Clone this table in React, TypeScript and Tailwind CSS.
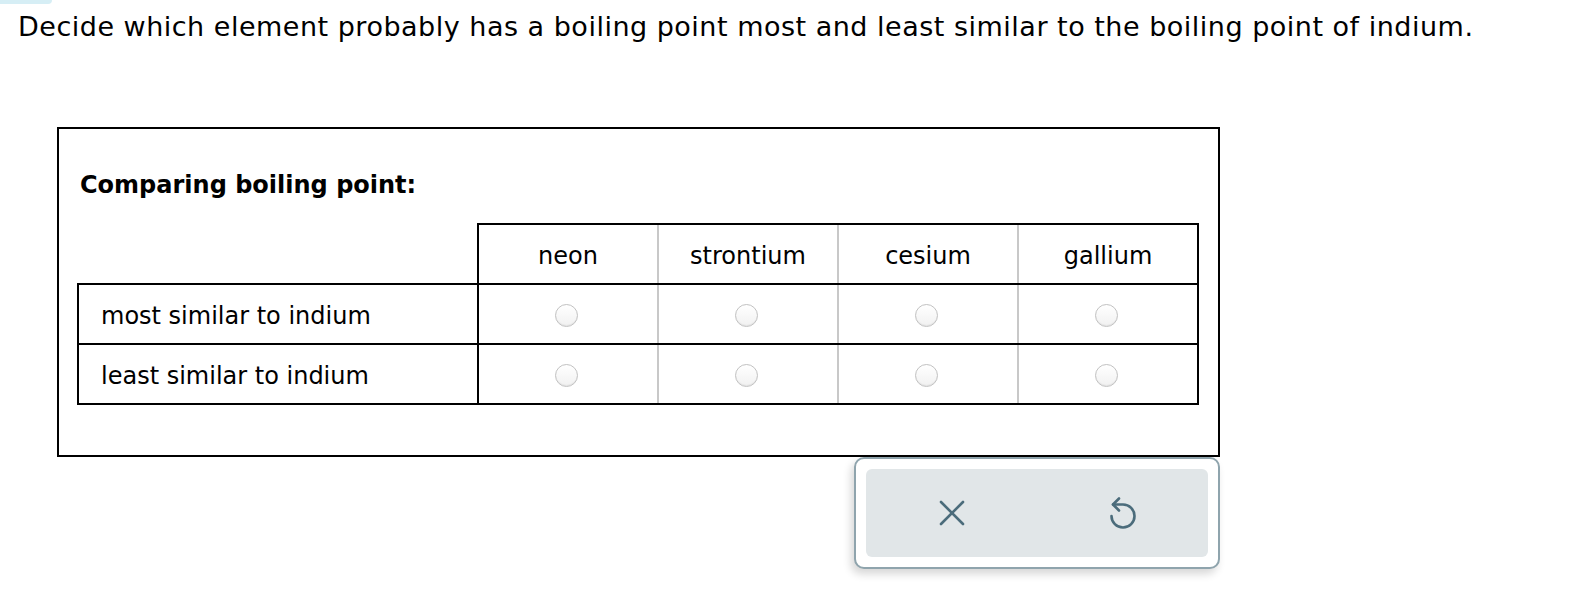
import {JSX} from 'react';

const ELEMENTS = ['neon', 'strontium', 'cesium', 'gallium'];
const ROWS = ['most similar to indium', 'least similar to indium'];

function Radio(): JSX.Element {
    return (
        <span className="inline-block w-[23px] h-[23px] rounded-full border border-[#c2c2c2] bg-gradient-to-b from-white to-[#f1f1f1] shadow-[inset_0_-1px_1px_rgba(0,0,0,0.06)] align-middle" />
    );
}

function CloseIcon(): JSX.Element {
    return (
        <svg width="26" height="26" viewBox="0 0 26 26" fill="none" stroke="#4b6c7b" strokeWidth={2.6} strokeLinecap="round">
            <path d="M2 2L24 24M24 2L2 24" />
        </svg>
    );
}

function UndoIcon(): JSX.Element {
    return (
        <svg width="30" height="32" viewBox="0 0 30 32" fill="none" stroke="#4b6c7b" strokeWidth={2.6} strokeLinecap="round" strokeLinejoin="round">
            <path d="M3.5 19A11.5 11.5 0 1 0 15 7.5H5" />
            <path d="M11 1.5L5 7.5L11 13.5" />
        </svg>
    );
}

const cellBorders = (i: number): string =>
    `border-t-2 border-t-black border-b-2 border-b-black ${
        i === 0 ? 'border-l-2 border-l-black' : 'border-l-2 border-l-[#c8c8c8]'
    } ${i === ELEMENTS.length - 1 ? 'border-r-2 border-r-black' : ''}`;

export default function App(): JSX.Element {
    return (
        <div className="relative min-h-[614px] bg-white text-black font-['DejaVu_Sans',Verdana,sans-serif]">
            {/* tab remnant top-left */}
            <div className="absolute left-0 top-0 w-[52px] h-[4px] rounded-br-[6px] bg-[#d6eef5]" />

            <div className="pl-[18px] pt-[11px] text-[27px] leading-[32px] tracking-[0.5px]">
                Decide which element probably has a boiling point most and least similar to the boiling point of indium.
            </div>

            <div className="ml-[57px] mt-[84px] w-[1163px]">
                <div className="border-2 border-black px-[18px] pt-[41px] pb-[50px]">
                    <div className="pl-[3px] text-[24px] leading-[30px] font-bold">Comparing boiling point:</div>
                    <table className="mt-[23px] border-collapse text-[24px]">
                        <thead>
                            <tr>
                                <th className="w-[400px] h-[60px] p-0" />
                                {ELEMENTS.map((el, i) => (
                                    <th key={el} className={`w-[180px] h-[60px] p-0 pt-[3px] font-normal text-center ${cellBorders(i)}`}>
                                        {el}
                                    </th>
                                ))}
                            </tr>
                        </thead>
                        <tbody>
                            {ROWS.map((row) => (
                                <tr key={row}>
                                    <td className="h-[60px] p-0 pl-[22px] pt-[3px] text-left border-2 border-black">{row}</td>
                                    {ELEMENTS.map((el, i) => (
                                        <td key={el} className={`h-[60px] p-0 pr-[4px] pt-[1px] text-center ${cellBorders(i)}`}>
                                            <Radio />
                                        </td>
                                    ))}
                                </tr>
                            ))}
                        </tbody>
                    </table>
                </div>

                <div className="flex justify-end">
                    <div className="w-[366px] h-[112px] mt-0 p-[10px] rounded-[10px] border-2 border-[#8fa4ad] bg-white shadow-[-3px_5px_9px_rgba(0,0,0,0.16)]">
                        <div className="flex h-full rounded-[6px] bg-[#e1e6e8]">
                            <button type="button" className="flex-1 flex items-center justify-center">
                                <CloseIcon />
                            </button>
                            <button type="button" className="flex-1 flex items-center justify-center">
                                <UndoIcon />
                            </button>
                        </div>
                    </div>
                </div>
            </div>
        </div>
    );
}
